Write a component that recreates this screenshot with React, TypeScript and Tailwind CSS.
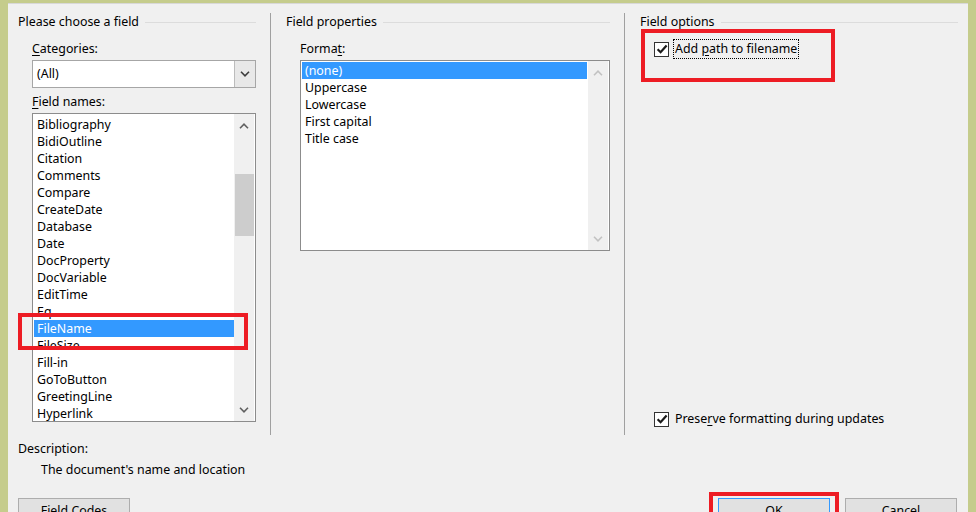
import React from 'react';

const fieldNames = [
  'Bibliography', 'BidiOutline', 'Citation', 'Comments', 'Compare', 'CreateDate',
  'Database', 'Date', 'DocProperty', 'DocVariable', 'EditTime', 'Eq', 'FileName',
  'FileSize', 'Fill-in', 'GoToButton', 'GreetingLine', 'Hyperlink',
];

const formats = ['(none)', 'Uppercase', 'Lowercase', 'First capital', 'Title case'];

const Chevron = ({ up, color }: { up?: boolean; color: string }) => (
  <svg width="10" height="6" viewBox="0 0 10 6">
    <path
      d={up ? 'M1 5.2 L5 1.2 L9 5.2' : 'M1 0.8 L5 4.8 L9 0.8'}
      fill="none"
      stroke={color}
      strokeWidth="1.6"
    />
  </svg>
);

const Check = () => (
  <svg width="12" height="12" viewBox="0 0 12 12">
    <path d="M1.6 6.2 L4.6 9.2 L10.6 2.4" fill="none" stroke="#1a1a1a" strokeWidth="2.2" />
  </svg>
);

const GroupTitle = ({ title, right }: { title: string; right: string }) => (
  <div className={`flex items-center h-[18px] ${right}`}>
    <span>{title}</span>
    <div className="flex-1 h-px bg-[#dcdcdc] ml-[6px]" />
  </div>
);

export default function App() {
  return (
    <div
      className="w-[976px] h-[512px] overflow-hidden bg-[#c5cc8c] pt-[3px] px-[8px] text-[12.4px] text-black"
      style={{ fontFamily: '"Noto Sans", "Segoe UI", sans-serif' }}
    >
      <div className="relative h-[520px] bg-[#f0f0f0] border-t border-[#d8d8d8]">
        {/* Columns */}
        <div className="flex pt-[9px] h-[431px]">
          {/* Left column */}
          <div className="w-[263px] shrink-0 border-r border-[#a0a0a0] pl-[10px]">
            <GroupTitle title="Please choose a field" right="pr-[14px]" />
            <div className="pl-[14px] pr-[14px]">
              <div className="mt-[10px] h-[16px] leading-[16px]">
                <span className="underline underline-offset-2">C</span>ategories:
              </div>
              <div className="mt-[3px] h-[28px] flex bg-white border border-[#a6a6a6]">
                <div className="flex-1 pl-[4px] leading-[26px]">(All)</div>
                <div className="w-[21px] bg-[#e8e8e8] border-l border-[#bcbcbc] flex items-center justify-center">
                  <Chevron color="#3c3c3c" />
                </div>
              </div>
              <div className="mt-[6px] h-[16px] leading-[16px]">
                <span className="underline underline-offset-2">F</span>ield names:
              </div>
              <div className="mt-[3px] h-[309px] flex bg-white border border-[#8c8c8c]">
                <div className="flex-1 pt-[2px] pl-[1px] overflow-hidden">
                  {fieldNames.map((n) => (
                    <div
                      key={n}
                      className={`h-[17px] leading-[17px] pl-[3px] ${n === 'FileName' ? 'bg-[#3399ff] text-white' : ''}`}
                    >
                      {n}
                    </div>
                  ))}
                </div>
                <div className="w-[20px] mr-px bg-[#f0f0f0] flex flex-col items-center">
                  <div className="h-[24px] flex items-center justify-center">
                    <Chevron up color="#606060" />
                  </div>
                  <div className="mt-[36px] w-[19px] h-[62px] bg-[#cdcdcd]" />
                  <div className="flex-1" />
                  <div className="h-[22px] flex items-center justify-center">
                    <Chevron color="#606060" />
                  </div>
                </div>
              </div>
            </div>
          </div>

          {/* Middle column */}
          <div className="w-[354px] shrink-0 border-r border-[#a0a0a0] pl-[15px]">
            <GroupTitle title="Field properties" right="pr-[14px]" />
            <div className="pl-[14px] pr-[14px]">
              <div className="mt-[10px] h-[16px] leading-[16px]">
                Forma<span className="underline underline-offset-2">t</span>:
              </div>
              <div className="mt-[3px] h-[191px] flex bg-white border border-[#8c8c8c]">
                <div className="flex-1 pt-[1px] pl-[1px] pr-px">
                  {formats.map((f) => (
                    <div
                      key={f}
                      className={`h-[17px] leading-[17px] pl-[3px] ${f === '(none)' ? 'bg-[#3399ff] text-white' : ''}`}
                    >
                      {f}
                    </div>
                  ))}
                </div>
                <div className="w-[20px] mr-px bg-[#f0f0f0] flex flex-col items-center justify-between">
                  <div className="h-[24px] flex items-center justify-center">
                    <Chevron up color="#c2c2c2" />
                  </div>
                  <div className="h-[22px] flex items-center justify-center">
                    <Chevron color="#c2c2c2" />
                  </div>
                </div>
              </div>
            </div>
          </div>

          {/* Right column */}
          <div className="flex-1 pl-[15px] flex flex-col">
            <GroupTitle title="Field options" right="pr-[10px]" />
            <div className="pl-[14px] mt-[8px] flex items-center">
              <div className="w-[15px] h-[15px] bg-white border border-[#333] flex items-center justify-center">
                <Check />
              </div>
              <div className="ml-[4px] px-[1px] h-[20px] leading-[18px] border border-dotted border-black">
                Add <span className="underline underline-offset-2">p</span>ath to filename
              </div>
            </div>
            <div className="flex-1" />
            <div className="pl-[14px] mb-[7px] flex items-center">
              <div className="w-[15px] h-[15px] bg-white border border-[#333] flex items-center justify-center">
                <Check />
              </div>
              <div className="ml-[6px] leading-[18px]">
                Prese<span className="underline underline-offset-2">r</span>ve formatting during updates
              </div>
            </div>
          </div>
        </div>

        {/* Description */}
        <div className="pl-[10px] mt-[6px] h-[16px] leading-[16px]">Description:</div>
        <div className="pl-[33px] mt-[5px] h-[16px] leading-[16px]">The document's name and location</div>

        {/* Buttons */}
        <div className="flex mt-[20px] pl-[10px] pr-[11px]">
          <div className="w-[112px] h-[26px] bg-[#e1e1e1] border border-[#adadad] flex items-center justify-center">
            Field Codes
          </div>
          <div className="flex-1" />
          <div className="w-[112px] h-[26px] bg-[#e1e1e1] border border-[#3399ff] flex items-center justify-center">
            OK
          </div>
          <div className="w-[112px] h-[26px] ml-[15px] bg-[#e1e1e1] border border-[#adadad] flex items-center justify-center">
            Cancel
          </div>
        </div>

        {/* Red annotation boxes */}
        <div className="absolute left-[10px] top-[309px] w-[230px] h-[37px] border-4 border-[#ed1c24]" />
        <div className="absolute left-[633px] top-[25px] w-[194px] h-[53px] border-4 border-[#ed1c24]" />
        <div className="absolute left-[701px] top-[488px] w-[130px] h-[40px] border-4 border-[#ed1c24]" />
      </div>
    </div>
  );
}
